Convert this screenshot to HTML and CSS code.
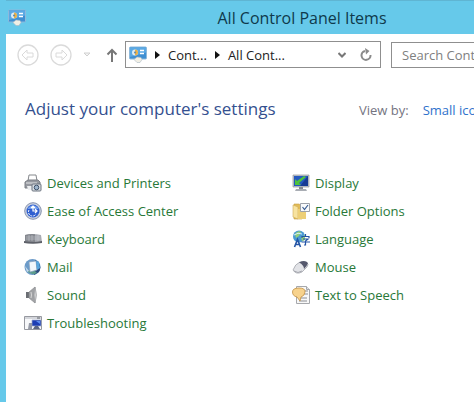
FILE: index.html
```
<!DOCTYPE html>
<html lang="en">
<head>
    <meta charset="UTF-8">
    <meta name="viewport" content="width=device-width, initial-scale=1.0">
    <title>All Control Panel Items</title>
    <link rel="stylesheet" href="styles.css">
</head>
<body>

<!-- Control panel icon, used in the title bar and the address bar -->
<svg class="defs" width="0" height="0" aria-hidden="true">
    <symbol id="cp" viewBox="0 0 18 18">
        <rect x="0.5" y="1" width="17" height="12" rx="1" fill="#3f8fd2" stroke="#8db9dc"/>
        <path d="M1 1.5h16v5L1 11z" fill="#5ba9e4"/>
        <circle cx="6" cy="6.5" r="3" fill="#dcebf5"/>
        <path d="M6 6.5V3.5a3 3 0 0 1 0 6z" fill="#e8b04a"/>
        <circle cx="6" cy="6.5" r="1" fill="#5b87ab"/>
        <path d="M11 4.5h4M11 7.5h4" stroke="#fff" stroke-width="1.5"/>
        <path d="M5 13.5l3-2.5 4 .5 1 2-2 3H8z" fill="#f1efe5" stroke="#a9b9c4" stroke-width=".6"/>
    </symbol>
</svg>

<div class="window">
    <header class="titlebar">
        <svg class="app-icon" width="18" height="18"><use href="#cp"/></svg>
        <h1>All Control Panel Items</h1>
    </header>

    <main class="content">
        <nav class="toolbar">
            <button class="nav-btn" type="button" aria-label="Back" disabled>
                <svg width="22" height="22" viewBox="0 0 22 22" fill="none" stroke="#dadada">
                    <circle cx="11" cy="11" r="10" stroke-width="1.3"/>
                    <path d="M5 11l5-5v3h6v4h-6v3z"/>
                </svg>
            </button>
            <button class="nav-btn" type="button" aria-label="Forward" disabled>
                <svg width="22" height="22" viewBox="0 0 22 22" fill="none" stroke="#dadada">
                    <circle cx="11" cy="11" r="10" stroke-width="1.3"/>
                    <path d="M17 11l-5-5v3H6v4h6v3z"/>
                </svg>
            </button>
            <button class="recent-btn" type="button" aria-label="Recent locations" disabled>
                <svg width="8" height="5" viewBox="0 0 8 5"><path d="M1 1h6L4 4z" fill="#f5f5f5" stroke="#d0d0d0"/></svg>
            </button>
            <button class="up-btn" type="button" aria-label="Up">
                <svg width="12" height="14" viewBox="0 0 12 14" fill="none" stroke="#777" stroke-width="2"><path d="M6 14V2M1.5 6.5L6 2l4.5 4.5"/></svg>
            </button>

            <div class="address">
                <svg width="18" height="18"><use href="#cp"/></svg>
                <svg class="sep" width="5" height="8" viewBox="0 0 5 8"><path d="M0 0l5 4-5 4z"/></svg>
                <button type="button">Cont...</button>
                <svg class="sep" width="5" height="8" viewBox="0 0 5 8"><path d="M0 0l5 4-5 4z"/></svg>
                <button type="button">All Cont...</button>
                <button class="history-btn" type="button" aria-label="Previous locations">
                    <svg width="8" height="6" viewBox="0 0 8 6" fill="none" stroke="#777" stroke-width="2"><path d="M0.5 1L4 4.500 7.500 1"/></svg>
                </button>
                <button class="refresh-btn" type="button" aria-label="Refresh">
                    <svg width="12" height="13" viewBox="0 0 12 13" fill="none" stroke="#8a8a8a">
                        <path d="M5 3A4.500 4.500 0 1 0 10.500 7" stroke-width="2"/>
                        <path d="M5 0l4.500 3L6 6.500z" fill="#8a8a8a" stroke="none"/>
                    </svg>
                </button>
            </div>

            <input class="search" type="search" placeholder="Search Control Panel" aria-label="Search Control Panel">
        </nav>

        <div class="heading">
            <h2>Adjust your computer's settings</h2>
            <label for="viewBy">View by:</label>
            <select id="viewBy">
                <option>Category</option>
                <option>Large icons</option>
                <option selected>Small icons</option>
            </select>
        </div>

        <div class="items">
            <a href="#">
                <svg width="18" height="18" viewBox="0 0 18 18">
                    <path d="M5 1h7l1 6H4z" fill="#fff" stroke="#85888c"/>
                    <path d="M1 8l3-2h10l2 2v6H1z" fill="#9699a0" stroke="#7b7e85"/>
                    <path d="M2 9h11" stroke="#e5e6e8"/>
                    <path d="M3 12h6v4H4z" fill="#eceef0"/>
                    <rect x="8" y="10" width="9" height="7" rx="1" fill="#d9dde2" stroke="#6c7480"/>
                    <circle cx="12.5" cy="13.5" r="2.3" fill="#9fb5cc" stroke="#40536b"/>
                </svg>
                <span>Devices and Printers</span>
            </a>
            <a href="#">
                <svg width="18" height="18" viewBox="0 0 18 18">
                    <circle cx="9" cy="9" r="8.3" fill="#cbd2e0" stroke="#8793ad"/>
                    <circle cx="9" cy="9" r="6.5" fill="#2f5fd0"/>
                    <path d="M3.5 7a6 6 0 0 1 11 0z" fill="#6f9cec"/>
                    <path d="M9 4v5h4M11 7l2 2-2 2M7 6L9 4l2 2" stroke="#fff" stroke-width="1.2" fill="none"/>
                    <path d="M5 8a4 4 0 0 0 7 4" stroke="#fff" fill="none" stroke-dasharray="2 1"/>
                </svg>
                <span>Ease of Access Center</span>
            </a>
            <a href="#">
                <svg width="18" height="18" viewBox="0 0 18 18">
                    <path d="M1 5q7-2 16 0l1 7q-9 2-17 1z" fill="#a9abb2"/>
                    <path d="M1 5q6-1.500 10-.8V12H1z" fill="#85888f"/>
                    <path d="M2 7h14M2 9h14M5 5v6M8 5v6M14 5v6" stroke="#c3c6cc" stroke-width=".6"/>
                    <path d="M0 11q9 2 18 0v2q-9 1.500-18 0z" fill="#5e6169"/>
                </svg>
                <span>Keyboard</span>
            </a>
            <a href="#">
                <svg width="18" height="18" viewBox="0 0 18 18">
                    <circle cx="8.5" cy="9" r="8" fill="#6c9bc9"/>
                    <path d="M11 2q8 5 4 12l-5 3z" fill="#2c4b7c"/>
                    <path d="M3 13q5 5 10 2l-3-3z" fill="#5c9d8c"/>
                    <path d="M5 4l7-1 1 9-7 2z" fill="#f3f8fc" stroke="#88a2bd" stroke-width=".7"/>
                    <path d="M12 3l3 1 1 6-3 2z" fill="#5ba8df"/>
                    <path d="M1 8l4 5-2 1z" fill="#c5d9ea"/>
                </svg>
                <span>Mail</span>
            </a>
            <a href="#">
                <svg width="18" height="18" viewBox="0 0 18 18">
                    <path d="M2 6h4v6H2z" fill="#6b6e74"/>
                    <path d="M5 6l6-5v16l-6-5z" fill="#a0a2a5" stroke="#85878a" stroke-width=".6"/>
                    <path d="M11 1q3 8 0 16-2-8 0-16z" fill="#d0d1d3" stroke="#929497" stroke-width=".6"/>
                    <path d="M7 6q1 3 0 6" stroke="#d8d8d8" fill="none"/>
                </svg>
                <span>Sound</span>
            </a>
            <a href="#">
                <svg width="18" height="18" viewBox="0 0 18 18">
                    <path d="M.5 2.500h17v13H.5z" fill="#f7f8fa" stroke="#9799a0"/>
                    <path d="M1 3h16v2H1z" fill="#d4d6db"/>
                    <path d="M13 4h3" stroke="#5e626b"/>
                    <path d="M8 6h9v6H8z" fill="#1d3eb4" stroke="#9dabc8" stroke-width=".7"/>
                    <path d="M12 7h4v3z" fill="#5e8cf0"/>
                    <path d="M11 12h3l2 3H9z" fill="#5c6681"/>
                    <path d="M5 9h3v6H4z" fill="#969ba7"/>
                </svg>
                <span>Troubleshooting</span>
            </a>
            <a href="#">
                <svg width="18" height="18" viewBox="0 0 18 18">
                    <path d="M1 1h16v12H1z" fill="#bfc3c9" stroke="#8f959e" stroke-width=".7"/>
                    <path d="M2 2h14v10H2z" fill="#173b94"/>
                    <path d="M2 2h14l-8 10H2z" fill="#2459bf"/>
                    <path d="M3 5l2 2 7-5 2 1-7 6 2 2H3z" fill="#4fc23d"/>
                    <path d="M7 13h4v2H7z" fill="#858a93"/>
                    <path d="M4 15h10l1 2H3z" fill="#a9adb4"/>
                </svg>
                <span>Display</span>
            </a>
            <a href="#">
                <svg width="18" height="18" viewBox="0 0 18 18">
                    <path d="M2 2h5l3 2v13H2z" fill="#e2bc58" stroke="#c79d45" stroke-width=".6"/>
                    <path d="M1 3l5 2v12l-5-2z" fill="#f7e3a0" stroke="#d0ac58" stroke-width=".6"/>
                    <path d="M6 7h8v10H6z" fill="#edcf77"/>
                    <path d="M8.500 1.500h9v8h-9z" fill="#f8fafc" stroke="#9da2ab"/>
                    <path d="M10.500 5l2 2.500L16 3" fill="none" stroke="#375b92" stroke-width="1.2"/>
                </svg>
                <span>Folder Options</span>
            </a>
            <a href="#">
                <svg width="18" height="18" viewBox="0 0 18 18">
                    <circle cx="7" cy="6.5" r="6" fill="#4a9ad3"/>
                    <path d="M3 4q3-4 6-2L7 6 4 8zM9 7l4-2v5l-3 1z" fill="#92cf79"/>
                    <path d="M2 5q4-3 8-1" stroke="#d8effa" fill="none"/>
                    <path d="M2.500 17L5.500 9.500 8.500 17M4 14.500h3" fill="none" stroke="#2455a6" stroke-width="1.6"/>
                    <path d="M13.500 4v2M10 8V6.500h7V8M11 9h5l-2.500 2v4H12M9.500 12h8.500" fill="none" stroke="#2455a6" stroke-width="1.2"/>
                </svg>
                <span>Language</span>
            </a>
            <a href="#">
                <svg width="18" height="18" viewBox="0 0 18 18">
                    <path d="M1 12q2-6 7-8l7 1q2 1 0 4l-5 5q-6 3-9-2z" fill="#e2e3e7" stroke="#9a9ca4" stroke-width=".7"/>
                    <path d="M7 4.500q6-3 9 .5-1 3-4 6 0-4-5-6.500z" fill="#55586d"/>
                    <path d="M2 13q4 3 8 0" stroke="#a5a7af" fill="none"/>
                </svg>
                <span>Mouse</span>
            </a>
            <a href="#">
                <svg width="18" height="18" viewBox="0 0 18 18">
                    <path d="M4.500 .5h10l3 3v14h-13z" fill="#f8f8f8" stroke="#a6a8ac"/>
                    <path d="M11 5h5M11 8h5M7 12h8M7 15h8" stroke="#8b8e94"/>
                    <path d="M14.500 .5v3h3" fill="#dfe0e2" stroke="#a6a8ac"/>
                    <path d="M.5 6q0-4 6.500-4t6 4-4 5l-1 4-3-4Q.5 10 .5 6z" fill="#f7d28c" stroke="#c39142" stroke-width=".8"/>
                </svg>
                <span>Text to Speech</span>
            </a>
        </div>
    </main>
</div>

</body>
</html>
```
FILE: styles.css
```
* {
    box-sizing: border-box;
}
body {
    margin: 0;
    font-family: "Open Sans", "Noto Sans", sans-serif;
    font-size: 13px;
    background-color: #fff;
    overflow: hidden;
}
h1, h2 {
    margin: 0;
    font-weight: normal;
}
button {
    display: flex;
    padding: 0;
    border: none;
    background: none;
    font: inherit;
    color: inherit;
}
svg {
    flex: none;
}
.defs {
    position: absolute;
}

/* Window frame */
.window {
    display: flex;
    flex-direction: column;
    min-width: 604px;
    min-height: 100vh;
    padding: 0 6px;
    background-color: #66c9ea;
}
.titlebar {
    display: grid;
    grid-template-columns: 18px 1fr 18px;
    align-items: center;
    height: 34px;
    padding: 0 2px;
    border-top: 1px solid #5fb5d3;
}
.titlebar h1 {
    font-size: 16px;
    line-height: 24px;
    text-align: center;
    color: #0f3a4c;
}
.content {
    flex: 1;
    background-color: #fff;
}

/* Toolbar */
.toolbar {
    display: flex;
    align-items: center;
    padding: 7px 10px 0 11px;
}
.nav-btn {
    margin-right: 11px;
}
.recent-btn {
    margin-right: 15px;
}
.up-btn {
    margin-right: 7px;
}
.address {
    display: flex;
    align-items: center;
    width: 256px;
    height: 27px;
    padding: 0 8px 0 3px;
    border: 1px solid #8f8f8f;
    color: #222;
}
.sep {
    margin: 0 8px;
    fill: #111;
}
.history-btn {
    margin-left: auto;
    margin-right: 14px;
}
.search {
    flex: 1;
    height: 26px;
    min-width: 0;
    margin-left: 10px;
    padding: 0 10px;
    border: 1px solid #8f8f8f;
    border-radius: 0;
    background-color: #fff;
    font: inherit;
}
.search::placeholder {
    color: #808080;
}

/* Heading row */
.heading {
    display: flex;
    align-items: baseline;
    padding: 29px 19px 0;
}
.heading h2 {
    width: 334px;
    font-size: 17px;
    line-height: 24px;
    color: #34508f;
}
.heading label {
    color: #74747f;
}
.heading select {
    appearance: none;
    margin-left: 14px;
    padding: 0;
    border: none;
    background: none;
    font: inherit;
    color: #2f72cc;
}

/* Item list */
.items {
    display: grid;
    grid-template-columns: 268px 268px;
    grid-template-rows: repeat(6, 28px);
    grid-auto-flow: column;
    padding: 48px 18px 0;
}
.items a {
    display: flex;
    align-items: center;
    gap: 5px;
    line-height: 18px;
    color: #287838;
    text-decoration: none;
}
.items a:hover {
    text-decoration: underline;
}
```
